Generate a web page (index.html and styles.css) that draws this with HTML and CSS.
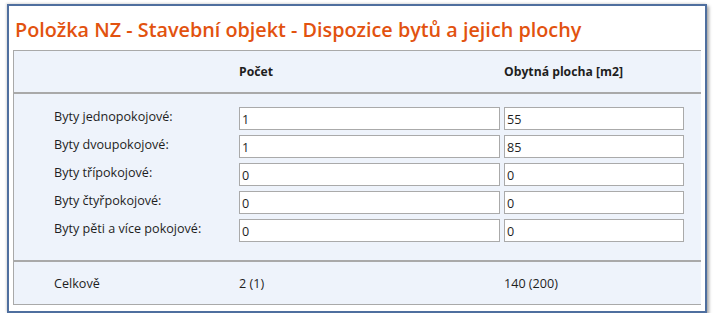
FILE: index.html
```html
<!DOCTYPE html>
<html lang="cs">
<head>
    <meta charset="UTF-8">
    <title>Dispozice bytů</title>
    <link rel="stylesheet" href="styles.css">
</head>
<body>
    <div class="frame">
        <h1 class="title">Položka NZ - Stavební objekt - Dispozice bytů a jejich plochy</h1>
        <div class="grid-table">
            <div class="row head">
                <div></div>
                <div>Počet</div>
                <div>Obytná plocha [m2]</div>
            </div>
            <div class="body">
                <div class="row">
                    <label for="p1">Byty jednopokojové:</label>
                    <input id="p1" class="inp-count" type="text" value="1">
                    <input class="inp-area" type="text" value="55">
                </div>
                <div class="row">
                    <label for="p2">Byty dvoupokojové:</label>
                    <input id="p2" class="inp-count" type="text" value="1">
                    <input class="inp-area" type="text" value="85">
                </div>
                <div class="row">
                    <label for="p3">Byty třípokojové:</label>
                    <input id="p3" class="inp-count" type="text" value="0">
                    <input class="inp-area" type="text" value="0">
                </div>
                <div class="row">
                    <label for="p4">Byty čtyřpokojové:</label>
                    <input id="p4" class="inp-count" type="text" value="0">
                    <input class="inp-area" type="text" value="0">
                </div>
                <div class="row">
                    <label for="p5">Byty pěti a více pokojové:</label>
                    <input id="p5" class="inp-count" type="text" value="0">
                    <input class="inp-area" type="text" value="0">
                </div>
            </div>
            <div class="row foot">
                <div>Celkově</div>
                <div>2 (1)</div>
                <div>140 (200)</div>
            </div>
        </div>
    </div>
</body>
</html>
```

FILE: styles.css
```css
body {
    margin: 0;
    background: #fff;
    font-family: 'Open Sans', Arial, sans-serif;
    color: #1e1e1e;
}
.frame {
    margin: 4px 0 0 7px;
    width: 700px;
    height: 309px;
    border: 2px solid #4f6f9f;
    box-shadow: 2px 2px 3px rgba(0,0,0,0.35), -1px -1px 2px rgba(0,0,0,0.12);
    background: #fff;
    padding: 0 4px;
    box-sizing: border-box;
}
.title {
    margin: 0;
    padding: 10px 0 0 2px;
    height: 44px;
    box-sizing: border-box;
    font-size: 19.8px;
    font-weight: 600;
    color: #e2520f;
}
.grid-table {
    width: 687px;
    background: #eef3fb;
    border: 1px solid #a9a9a9;
    border-right: none;
    font-size: 12.6px;
}
.row {
    display: grid;
    grid-template-columns: 185px 265px 180px;
    padding-left: 40px;
}
.head {
    height: 41px;
    align-items: center;
    font-weight: 700;
    font-size: 12.2px;
    border-bottom: 2px solid #a9a9a9;
}
.body {
    padding: 13px 0;
    border-bottom: 2px solid #a9a9a9;
}
.body .row {
    height: 28px;
}
.body label {
    padding-top: 1px;
}
input {
    height: 23px;
    box-sizing: border-box;
    border: 1px solid #aaa;
    padding: 2px 2px 0 2px;
    font-family: inherit;
    font-size: 12.6px;
    color: #1e1e1e;
    background: #fff;
    margin: 0;
}
.inp-count {
    width: 261px;
}
.inp-area {
    width: 180px;
}
.foot {
    height: 42px;
    align-items: center;
}
```
